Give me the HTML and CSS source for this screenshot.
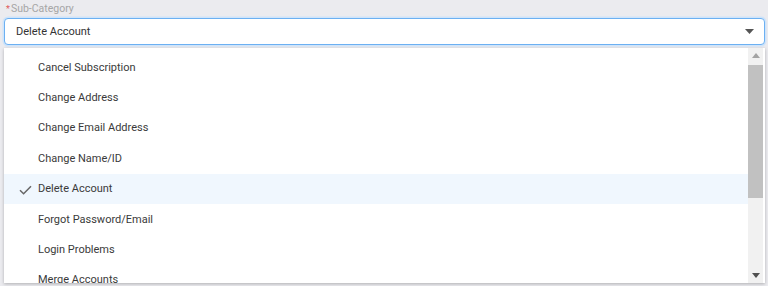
FILE: index.html
```html
<!DOCTYPE html>
<html>
<head>
<meta charset="utf-8">
<link rel="stylesheet" href="styles.css">
</head>
<body>
<div class="field">
  <div class="label"><span class="req">*</span>Sub-Category</div>
  <div class="select">
    <span class="value">Delete Account</span>
    <svg class="caret" width="9" height="5" viewBox="0 0 9 5"><path d="M0 0H9L4.5 5Z" fill="#555"/></svg>
  </div>
  <div class="menu">
    <ul class="list">
      <li class="item">Cancel Subscription</li>
      <li class="item">Change Address</li>
      <li class="item">Change Email Address</li>
      <li class="item">Change Name/ID</li>
      <li class="item selected"><svg class="check" width="13" height="10" viewBox="0 0 13 10"><path d="M1 5.2L4.6 8.8L12 1.2" fill="none" stroke="#666" stroke-width="1.5"/></svg>Delete Account</li>
      <li class="item">Forgot Password/Email</li>
      <li class="item">Login Problems</li>
      <li class="item">Merge Accounts</li>
    </ul>
    <div class="scrollbar">
      <div class="sb-btn"><svg width="8" height="5" viewBox="0 0 8 5"><path d="M0 5H8L4 0Z" fill="#a3a3a3"/></svg></div>
      <div class="sb-track"><div class="sb-thumb"></div></div>
      <div class="sb-btn"><svg width="8" height="5" viewBox="0 0 8 5"><path d="M0 0H8L4 5Z" fill="#505050"/></svg></div>
    </div>
  </div>
</div>
</body>
</html>
```
FILE: styles.css
```css
html, body {
  margin: 0;
  padding: 0;
  background: #ebebef;
  height: 286px;
  overflow: hidden;
}
body {
  font-family: Roboto, "Liberation Sans", sans-serif;
  color: #333;
}
.field {
  padding: 2px 3px 0 4px;
}
.label {
  font-size: 10.5px;
  color: #a6a6a6;
  height: 16px;
  line-height: 14px;
  padding-left: 2px;
}
.req {
  color: #e05a5a;
  font-size: 9px;
  margin-right: 1px;
}
.select {
  height: 25px;
  background: #fff;
  border: 1px solid #6cb0f2;
  border-radius: 4px;
  box-shadow: 0 0 0 1.5px #cfe4fa;
  display: flex;
  align-items: center;
  justify-content: space-between;
  padding: 0 10px 0 11px;
  font-size: 11px;
  color: #333;
}
.menu {
  margin-top: 3px;
  background: #fff;
  height: 235px;
  display: flex;
  box-shadow: 0 1px 3px rgba(0,0,0,0.25);
  overflow: hidden;
}
.list {
  list-style: none;
  margin: 0;
  padding: 4px 0 0 0;
  flex: 1;
}
.item {
  height: 30.4px;
  display: flex;
  align-items: center;
  padding-left: 34px;
  font-size: 11px;
  color: #3a3a3a;
  position: relative;
}
.item.selected {
  background: #f0f7fe;
}
.check {
  position: absolute;
  left: 15px;
  top: 11px;
}
.scrollbar {
  width: 15px;
  background: #f1f1f1;
  display: flex;
  flex-direction: column;
  margin-right: 2px;
}
.sb-btn {
  height: 15px;
  display: flex;
  align-items: center;
  justify-content: center;
}
.sb-track {
  flex: 1;
}
.sb-thumb {
  height: 133px;
  background: #c1c1c1;
  margin-top: 2px;
}
```
